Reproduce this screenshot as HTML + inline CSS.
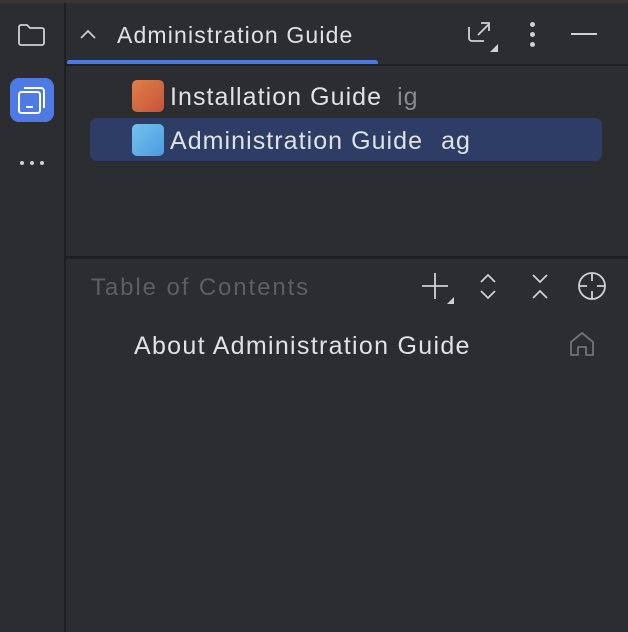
<!DOCTYPE html>
<html><head><meta charset="utf-8"><style>
*{margin:0;padding:0;box-sizing:border-box}
body{width:628px;height:632px;background:#2b2d30;font-family:"Liberation Sans",sans-serif;position:relative;overflow:hidden;color:#dfe1e5}
.abs{position:absolute}
</style></head><body>
<div class="abs" style="left:0;top:0;width:628px;height:3px;background:#3d3533"></div>
<div class="abs" style="left:0;top:3px;width:64px;height:629px;background:#2b2d30"></div>
<div class="abs" style="left:64px;top:3px;width:2px;height:629px;background:#1e1f22"></div>
<svg class="abs" style="left:17px;top:22px" width="30" height="28" viewBox="0 0 30 28"><path d="M2 5a2 2 0 0 1 2-2h6l3 3h12a2 2 0 0 1 2 2v13a2 2 0 0 1-2 2H4a2 2 0 0 1-2-2z" fill="none" stroke="#ced0d6" stroke-width="1.8"/></svg>
<div class="abs" style="left:10px;top:78px;width:44px;height:44px;background:#4e7ae6;border-radius:9px"></div>
<svg class="abs" style="left:10px;top:78px" width="44" height="44" viewBox="0 0 44 44"><rect x="9" y="14" width="21" height="21" rx="2.5" fill="none" stroke="#fff" stroke-width="2"/><path d="M14 10h17a3 3 0 0 1 3 3v17" fill="none" stroke="#fff" stroke-width="2"/><path d="M16 29h7" stroke="#fff" stroke-width="2"/></svg>
<div class="abs" style="left:20px;top:161px;width:24px;height:4px;display:flex;justify-content:space-between"><i style="width:4px;height:4px;border-radius:2px;background:#ced0d6"></i><i style="width:4px;height:4px;border-radius:2px;background:#ced0d6"></i><i style="width:4px;height:4px;border-radius:2px;background:#ced0d6"></i></div>
<svg class="abs" style="left:79px;top:28px" width="18" height="14" viewBox="0 0 18 14"><path d="M2 10l7-7 7 7" fill="none" stroke="#ced0d6" stroke-width="1.7"/></svg>
<div class="abs" style="left:117px;top:22px;font-size:23px;letter-spacing:1.15px;color:#dfe1e5">Administration Guide</div>
<div class="abs" style="left:67px;top:60px;width:311px;height:5px;background:#4a78e6;border-radius:3px"></div>
<div class="abs" style="left:66px;top:64px;width:562px;height:2px;background:#1e1f22"></div>
<svg class="abs" style="left:466px;top:20px" width="34" height="34" viewBox="0 0 34 34"><path d="M3 7v11a3 3 0 0 0 3 3h12" fill="none" stroke="#ced0d6" stroke-width="1.8"/><path d="M12 15l11-11M15 3h8v8" fill="none" stroke="#ced0d6" stroke-width="1.8"/><path d="M32 24v8h-8z" fill="#ced0d6"/></svg>
<div class="abs" style="left:530px;top:22px;width:5px;height:24px"><i style="position:absolute;top:0;width:5px;height:5px;border-radius:3px;background:#ced0d6"></i><i style="position:absolute;top:10px;width:5px;height:5px;border-radius:3px;background:#ced0d6"></i><i style="position:absolute;top:20px;width:5px;height:5px;border-radius:3px;background:#ced0d6"></i></div>
<div class="abs" style="left:571px;top:33px;width:26px;height:2px;background:#ced0d6"></div>
<div class="abs" style="left:90px;top:118px;width:512px;height:43px;background:#2e3d66;border-radius:7px"></div>
<div class="abs" style="left:132px;top:80px;width:32px;height:32px;border-radius:5px;background:linear-gradient(135deg,#e07f48,#c6533b)"></div>
<div class="abs" style="left:170px;top:83px;font-size:25px;letter-spacing:1.05px;color:#dfe1e5;white-space:nowrap">Installation Guide<span style="color:#868a91;margin-left:15px">ig</span></div>
<div class="abs" style="left:132px;top:124px;width:32px;height:32px;border-radius:5px;background:linear-gradient(135deg,#74c2ee,#4d9be0)"></div>
<div class="abs" style="left:170px;top:127px;font-size:25px;letter-spacing:1.05px;color:#dfe1e5;white-space:nowrap">Administration Guide<span style="margin-left:18px">ag</span></div>
<div class="abs" style="left:66px;top:256px;width:562px;height:3px;background:#1e1f22"></div>
<div class="abs" style="left:91px;top:274px;font-size:24px;letter-spacing:1.9px;color:#5b5e63;white-space:nowrap">Table of Contents</div>
<svg class="abs" style="left:420px;top:270px" width="36" height="36" viewBox="0 0 36 36"><path d="M15 3v26M2 16h26" stroke="#ced0d6" stroke-width="1.8"/><path d="M34 27v7h-7z" fill="#ced0d6"/></svg>
<svg class="abs" style="left:478px;top:272px" width="20" height="30" viewBox="0 0 20 30"><path d="M3 10l7-7 7 7M3 19l7 7 7-7" fill="none" stroke="#ced0d6" stroke-width="1.8"/></svg>
<svg class="abs" style="left:530px;top:272px" width="20" height="30" viewBox="0 0 20 30"><path d="M3 3l7 7 7-7M3 26l7-7 7 7" fill="none" stroke="#ced0d6" stroke-width="1.8"/></svg>
<svg class="abs" style="left:577px;top:271px" width="32" height="32" viewBox="0 0 32 32"><circle cx="15" cy="15" r="13" fill="none" stroke="#ced0d6" stroke-width="1.8"/><path d="M15 2v8M15 20v8M2 15h8M20 15h8" stroke="#ced0d6" stroke-width="1.8"/></svg>
<div class="abs" style="left:134px;top:332px;font-size:25px;letter-spacing:1.3px;color:#dfe1e5;white-space:nowrap">About Administration Guide</div>
<svg class="abs" style="left:568px;top:330px" width="28" height="28" viewBox="0 0 28 28"><path d="M3 25V12L14 3l11 9v13h-7v-8h-8v8z" fill="none" stroke="#6f737a" stroke-width="1.8" stroke-linejoin="round"/></svg>
</body></html>
